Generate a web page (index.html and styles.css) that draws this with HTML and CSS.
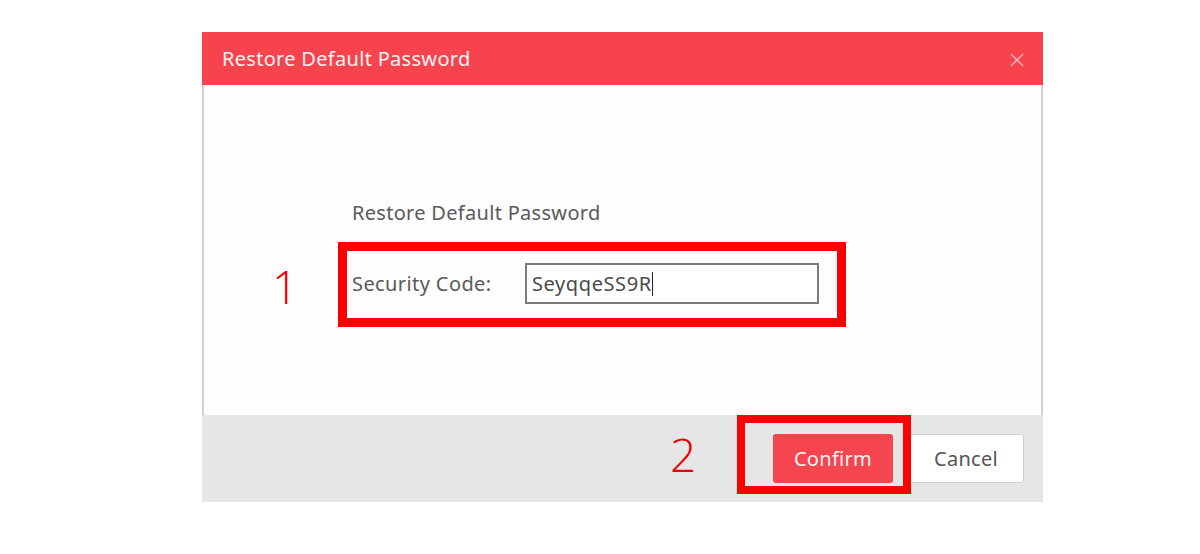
FILE: index.html
```html
<!DOCTYPE html>
<html lang="en">
<head>
<meta charset="utf-8">
<title>Restore Default Password</title>
<link rel="stylesheet" href="styles.css">
</head>
<body>
<div class="page">
  <div class="dialog">
    <div class="dialog-header">
      <span class="dialog-title">Restore Default Password</span>
      <svg class="close" width="14" height="14" viewBox="0 0 14 14" aria-hidden="true">
        <path d="M1 1 L13 13 M13 1 L1 13" stroke="#f3a9ad" stroke-width="1.6" fill="none"/>
      </svg>
    </div>
    <div class="dialog-body">
      <div class="section-label">Restore Default Password</div>
      <div class="field-row">
        <span class="field-label">Security Code:</span>
        <div class="text-input">SeyqqeSS9R<span class="caret"></span></div>
      </div>
    </div>
    <div class="dialog-footer">
      <button class="btn btn-primary">Confirm</button>
      <button class="btn btn-default">Cancel</button>
    </div>
    <div class="mark mark-1"></div>
    <div class="mark mark-2"></div>
    <span class="step step-1">1</span>
    <span class="step step-2">2</span>
  </div>
</div>
</body>
</html>
```

FILE: styles.css
```css
html, body {
  margin: 0;
  padding: 0;
  background: #ffffff;
}

.page {
  padding: 32px 0 0 202px;
  font-family: "Noto Sans", "Open Sans", sans-serif;
}

.dialog {
  position: relative;
  width: 841px;
}

.dialog-header {
  height: 53px;
  background: #f6434e;
  display: flex;
  align-items: center;
  justify-content: space-between;
  padding: 0 19px 0 20px;
}

.dialog-title {
  color: #fff3f3;
  font-size: 20px;
  letter-spacing: 0.3px;
}

.close {
  display: block;
  margin-top: 2px;
}

.dialog-body {
  height: 330px;
  box-sizing: border-box;
  background: #fdfdfd;
  border-left: 2px solid #d0d0d0;
  border-right: 2px solid #d0d0d0;
  padding: 115px 0 0 148px;
  color: #5a5a5a;
  font-size: 20px;
  letter-spacing: 0.3px;
}

.section-label {
  line-height: 26px;
}

.field-row {
  display: flex;
  align-items: center;
  margin-top: 37px;
}

.field-label {
  width: 173px;
  letter-spacing: 0.4px;
}

.text-input {
  width: 294px;
  height: 41px;
  box-sizing: border-box;
  border: 2px solid #7b7b7b;
  background: #ffffff;
  padding: 0 0 0 5px;
  display: flex;
  align-items: center;
  color: #4a4a4a;
  letter-spacing: 0.6px;
}

.caret {
  display: inline-block;
  width: 1px;
  height: 24px;
  background: #222;
  margin-left: 0;
}

.dialog-footer {
  height: 87px;
  background: #e6e6e6;
  display: flex;
  align-items: center;
  justify-content: flex-end;
  gap: 15px;
  padding-right: 19px;
}

.btn {
  height: 49px;
  border-radius: 3px;
  font-family: inherit;
  font-size: 20px;
  letter-spacing: 0.3px;
  padding: 0;
}

.btn-primary {
  width: 120px;
  background: #f5454f;
  border: none;
  color: #fff4f4;
}

.btn-default {
  width: 116px;
  background: #ffffff;
  border: 1px solid #cfcfcf;
  color: #555555;
}

.mark {
  position: absolute;
  border: 9px solid #ff0000;
  box-sizing: border-box;
}

.mark-1 {
  left: 136px;
  top: 210px;
  width: 508px;
  height: 85px;
}

.mark-2 {
  left: 535px;
  top: 383px;
  width: 174px;
  height: 79px;
  border-width: 8px;
}

.step {
  position: absolute;
  color: #ee0000;
  font-family: "Open Sans", "Noto Sans", sans-serif;
  font-weight: 300;
  font-size: 46px;
  line-height: 1;
}

.step-1 {
  left: 70px;
  top: 231px;
}

.step-2 {
  left: 468px;
  top: 399px;
}
```
